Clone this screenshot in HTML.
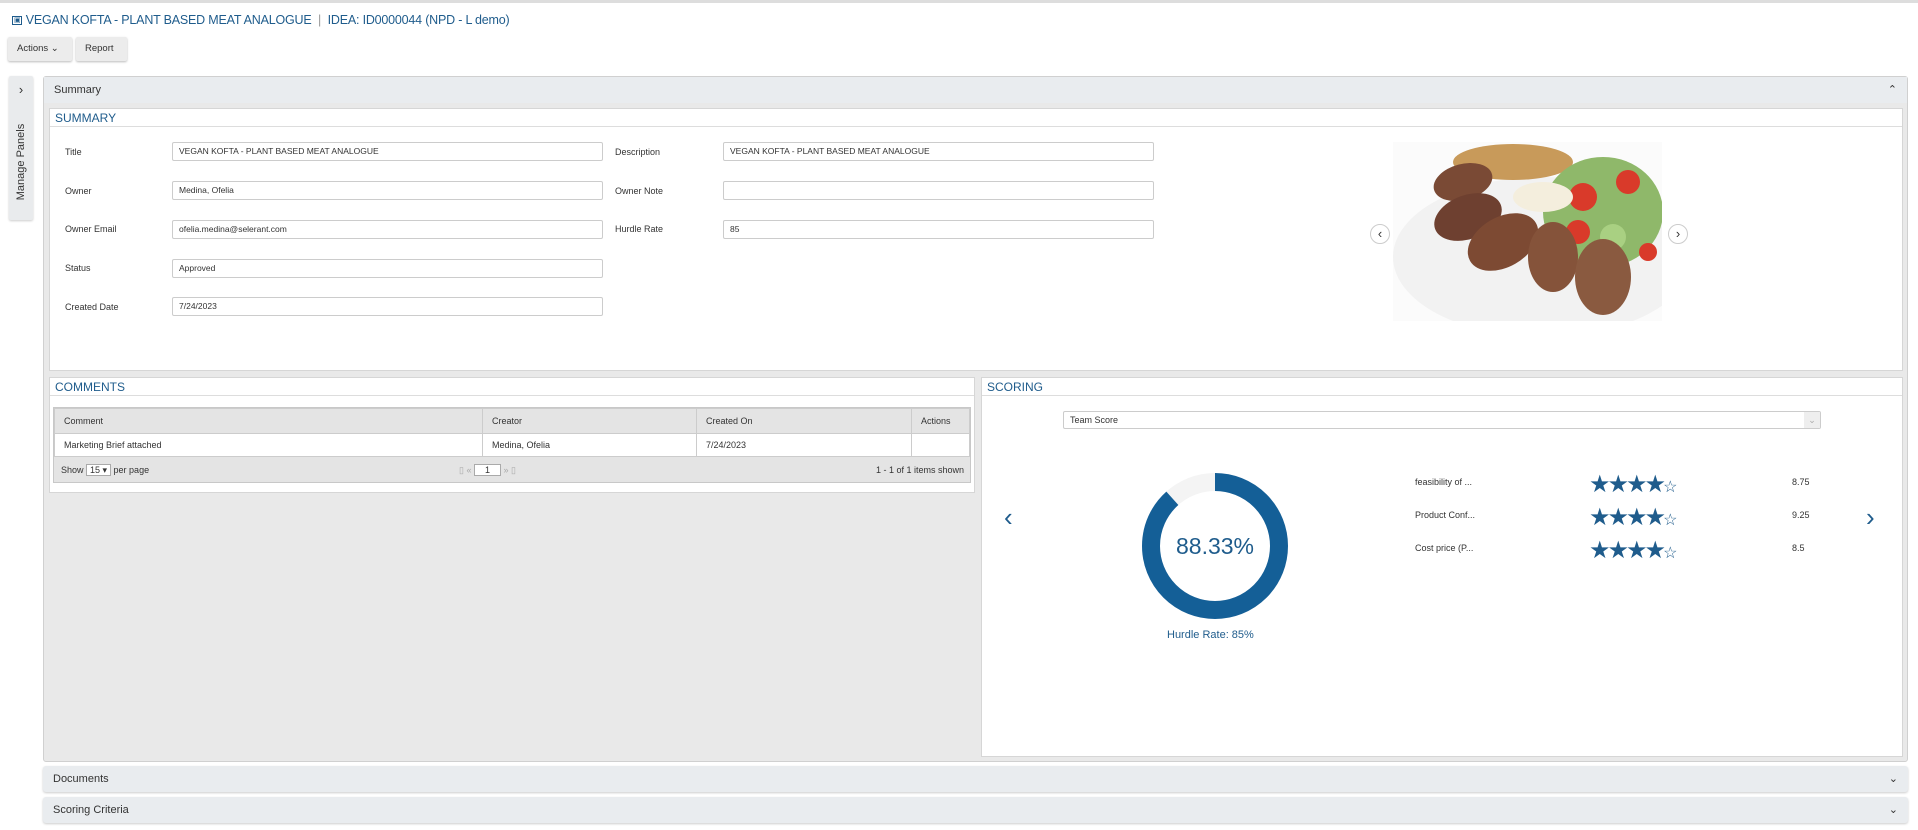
<!DOCTYPE html>
<html><head><meta charset="utf-8"><style>
*{box-sizing:border-box;margin:0;padding:0}
body{width:1918px;height:830px;background:#fff;font-family:"Liberation Sans",sans-serif;font-size:10px;color:#333;position:relative;overflow:hidden}
.a{position:absolute}
.topbar{left:0;top:0;width:1918px;height:3px;background:#ddd}
.title{left:12px;top:13px;font-size:12.5px;color:#1f5c8c;letter-spacing:-0.2px}
.btn{top:37px;height:24px;background:#ececec;border-radius:2px;box-shadow:0 1px 2px #bbb;font-size:9.5px;line-height:24px;padding:0 9px;color:#333}
.side{left:9px;top:76px;width:24px;height:144px;background:#e9ebed;border-radius:2px;box-shadow:0 1px 2px #ccc;overflow:hidden}
.main{left:43px;top:76px;width:1865px;height:686px;background:#e9e9e9;border:1px solid #d0d0d0;border-radius:3px}
.hdr{background:#e9ecef;font-size:11px;color:#333;line-height:26px;padding-left:10px}
.panel{background:#fff;border:1px solid #d6d6d6}
.ptitle{color:#1f5c8c;font-size:12px;height:18px;line-height:18px;padding-left:5px;border-bottom:1px solid #ddd}
.lbl{font-size:9px;color:#333}
.inp{height:19px;border:1px solid #ccc;border-radius:2px;font-size:8.5px;line-height:17px;padding-left:6px;background:#fff}
.circ{width:20px;height:20px;border-radius:50%;border:1px solid #ccc;background:#fff;text-align:center;line-height:18px;font-size:13px;color:#333}
table{border-collapse:collapse;font-size:9px}
td{border:1px solid #ccc;padding-left:9px}
.star{color:#1f5c8c;font-size:24px;letter-spacing:-3px}
</style></head><body>
<div class="a topbar"></div>
<div class="a title"><span style="border:1px solid #1f5c8c;padding:0 1px;font-size:7px;vertical-align:2px">▣</span> VEGAN KOFTA - PLANT BASED MEAT ANALOGUE &nbsp;<span style="color:#999">|</span>&nbsp; IDEA: ID0000044 (NPD - L demo)</div>
<div class="a btn" style="left:8px;width:64px">Actions &#8964;</div>
<div class="a btn" style="left:76px;width:51px">Report</div>
<div class="a side"><div style="text-align:center;margin-top:6px;font-size:13px">›</div><div style="transform:rotate(-90deg);position:absolute;left:-33px;top:80px;width:90px;font-size:11px;text-align:center">Manage Panels</div></div>
<div class="a main">
 <div class="hdr" style="height:26px">Summary<span style="float:right;margin-right:10px">&#8963;</span></div>
</div>
<div class="a panel" style="left:49px;top:108px;width:1854px;height:263px">
 <div class="ptitle">SUMMARY</div>
</div>
<div class="a lbl" style="left:65px;top:147px">Title</div><div class="a inp" style="left:172px;top:142px;width:431px">VEGAN KOFTA - PLANT BASED MEAT ANALOGUE</div>
<div class="a lbl" style="left:65px;top:186px">Owner</div><div class="a inp" style="left:172px;top:181px;width:431px">Medina, Ofelia</div>
<div class="a lbl" style="left:65px;top:224px">Owner Email</div><div class="a inp" style="left:172px;top:220px;width:431px">ofelia.medina@selerant.com</div>
<div class="a lbl" style="left:65px;top:263px">Status</div><div class="a inp" style="left:172px;top:259px;width:431px">Approved</div>
<div class="a lbl" style="left:65px;top:302px">Created Date</div><div class="a inp" style="left:172px;top:297px;width:431px">7/24/2023</div>
<div class="a lbl" style="left:615px;top:147px">Description</div><div class="a inp" style="left:723px;top:142px;width:431px">VEGAN KOFTA - PLANT BASED MEAT ANALOGUE</div>
<div class="a lbl" style="left:615px;top:186px">Owner Note</div><div class="a inp" style="left:723px;top:181px;width:431px"></div>
<div class="a lbl" style="left:615px;top:224px">Hurdle Rate</div><div class="a inp" style="left:723px;top:220px;width:431px">85</div>
<svg class="a" style="left:1393px;top:142px" width="269" height="179" viewBox="0 0 269 179">
<rect width="269" height="179" fill="#fbfbfb"/>
<ellipse cx="150" cy="115" rx="150" ry="80" fill="#f2f2f2"/>
<ellipse cx="120" cy="20" rx="60" ry="18" fill="#c89a5a"/>
<ellipse cx="210" cy="70" rx="60" ry="55" fill="#8fb86a"/>
<circle cx="190" cy="55" r="14" fill="#d93a2a"/><circle cx="235" cy="40" r="12" fill="#d93a2a"/><circle cx="185" cy="90" r="12" fill="#d93a2a"/><circle cx="255" cy="110" r="9" fill="#d93a2a"/>
<circle cx="220" cy="95" r="13" fill="#a9d082"/>
<ellipse cx="150" cy="55" rx="30" ry="15" fill="#f4eedd"/>
<ellipse cx="70" cy="40" rx="30" ry="18" fill="#7a4a35" transform="rotate(-15 70 40)"/>
<ellipse cx="75" cy="75" rx="35" ry="22" fill="#6e4030" transform="rotate(-20 75 75)"/>
<ellipse cx="110" cy="100" rx="38" ry="25" fill="#7d4a33" transform="rotate(-30 110 100)"/>
<ellipse cx="160" cy="115" rx="25" ry="35" fill="#85533a"/>
<ellipse cx="210" cy="135" rx="28" ry="38" fill="#8a5a40"/>
</svg>
<div class="a circ" style="left:1370px;top:224px">‹</div>
<div class="a circ" style="left:1668px;top:224px">›</div>

<div class="a panel" style="left:49px;top:377px;width:926px;height:116px"><div class="ptitle">COMMENTS</div></div>
<div class="a" style="left:53px;top:407px;width:918px;height:76px;background:#e4e4e4;border:1px solid #c8c8c8">
<table style="width:916px">
<tr style="height:25px;background:#e4e4e4"><td style="width:428px">Comment</td><td style="width:214px">Creator</td><td style="width:215px">Created On</td><td>Actions</td></tr>
<tr style="height:23px;background:#fff"><td>Marketing Brief attached</td><td>Medina, Ofelia</td><td>7/24/2023</td><td></td></tr>
</table>
<div style="position:relative;height:26px;font-size:9px;line-height:26px;padding-left:7px">Show <span style="border:1px solid #aaa;background:#fff;padding:0 3px">15 ▾</span> per page
<span style="position:absolute;left:405px;color:#aaa">▯ « <span style="border:1px solid #aaa;background:#fff;color:#333;padding:0 10px">1</span> » ▯</span>
<span style="position:absolute;right:6px">1 - 1 of 1 items shown</span></div>
</div>

<div class="a panel" style="left:981px;top:377px;width:922px;height:380px"><div class="ptitle">SCORING</div></div>
<div class="a inp" style="left:1063px;top:411px;width:758px;height:18px;font-size:9px">Team Score<span style="float:right;width:16px;height:16px;background:#eee;color:#aaa;text-align:center">&#8964;</span></div>
<div class="a" style="left:1004px;top:502px;font-size:26px;color:#1f5c8c">‹</div>
<div class="a" style="left:1866px;top:502px;font-size:26px;color:#1f5c8c">›</div>
<svg class="a" style="left:1140px;top:471px" width="150" height="150" viewBox="0 0 150 150">
<circle cx="75" cy="75" r="64" fill="none" stroke="#f4f4f4" stroke-width="18"/>
<circle cx="75" cy="75" r="64" fill="none" stroke="#145f97" stroke-width="18" stroke-dasharray="355.3 402.1" transform="rotate(-90 75 75)"/>
<text x="75" y="83" text-anchor="middle" font-family="Liberation Sans" font-size="23" fill="#1f5c8c">88.33%</text>
</svg>
<div class="a" style="left:1167px;top:629px;font-size:11px;color:#1f5c8c">Hurdle Rate: 85%</div>
<div class="a lbl" style="left:1415px;top:477px">feasibility of ...</div>
<div class="a lbl" style="left:1415px;top:510px">Product Conf...</div>
<div class="a lbl" style="left:1415px;top:543px">Cost price (P...</div>
<div class="a star" style="left:1589px;top:470px">★★★★<span style="font-size:16px">☆</span></div>
<div class="a star" style="left:1589px;top:503px">★★★★<span style="font-size:16px">☆</span></div>
<div class="a star" style="left:1589px;top:536px">★★★★<span style="font-size:16px">☆</span></div>
<div class="a lbl" style="left:1792px;top:477px">8.75</div>
<div class="a lbl" style="left:1792px;top:510px">9.25</div>
<div class="a lbl" style="left:1792px;top:543px">8.5</div>

<div class="a hdr" style="left:43px;top:766px;width:1865px;height:26px;border-radius:3px;box-shadow:0 1px 2px #ccc">Documents<span style="float:right;margin-right:10px">&#8964;</span></div>
<div class="a hdr" style="left:43px;top:797px;width:1865px;height:26px;border-radius:3px;box-shadow:0 1px 2px #ccc">Scoring Criteria<span style="float:right;margin-right:10px">&#8964;</span></div>
</body></html>
